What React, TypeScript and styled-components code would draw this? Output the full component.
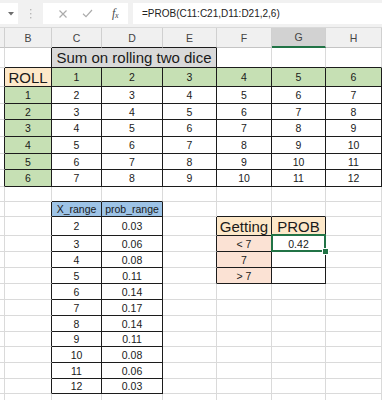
import styled, { createGlobalStyle } from "styled-components";

const GlobalStyle = createGlobalStyle`
  html, body {
    margin: 0;
    padding: 0;
    background: #ffffff;
  }
  body {
    font-family: "Liberation Sans", Arial, sans-serif;
  }
`;

// sheet geometry (px)
const COLS = [5, 47, 50, 61, 54, 55, 54, 56];
const ROWS = [20, 19, 17, 16, 17, 17, 16, 17, 15, 15, 19, 16, 16, 16, 16, 16, 16, 15, 16, 16, 15, 20];
const LETTERS = ["", "B", "C", "D", "E", "F", "G", "H"];
const ACTIVE_COL = 6;

const GRID = "#dadada";
const BLACK = "#1c1c1c";
const GREEN = "#c6e0b4";
const PEACH = "#fde8c9";
const PINK = "#fbe2d4";
const BLUE = "#9dc3e6";
const GRAY = "#d9d9d9";
const EXCEL = "#217346";

type CellData = {
    text?: string;
    bg?: string;
    big?: boolean;
    span?: number;
    covered?: boolean;
    selected?: boolean;
};

const cells = new Map<string, CellData>();
const put = (r: number, c: number, d: CellData) => cells.set(`${r}-${c}`, d);
const boxed = (r: number, c: number) => cells.has(`${r}-${c}`);

// title + dice table
put(1, 2, { text: "Sum on rolling two dice", bg: GRAY, big: true, span: 3 });
put(1, 3, { covered: true });
put(1, 4, { covered: true });
put(2, 1, { text: "ROLL", bg: PEACH, big: true });
for (let j = 1; j <= 6; j++) put(2, j + 1, { text: String(j), bg: GREEN });
for (let i = 1; i <= 6; i++) {
    put(2 + i, 1, { text: String(i), bg: GREEN });
    for (let j = 1; j <= 6; j++) put(2 + i, j + 1, { text: String(i + j) });
}

// x / prob table
const probs = ["0.03", "0.06", "0.08", "0.11", "0.14", "0.17", "0.14", "0.11", "0.08", "0.06", "0.03"];
put(10, 2, { text: "X_range", bg: BLUE });
put(10, 3, { text: "prob_range", bg: BLUE });
probs.forEach((p, k) => {
    put(11 + k, 2, { text: String(k + 2) });
    put(11 + k, 3, { text: p });
});

// result table
put(11, 5, { text: "Getting", bg: PEACH, big: true });
put(11, 6, { text: "PROB", bg: PEACH, big: true });
put(12, 5, { text: "< 7", bg: PINK });
put(12, 6, { text: "0.42", selected: true });
put(13, 5, { text: "7", bg: PINK });
put(13, 6, {});
put(14, 5, { text: "> 7", bg: PINK });
put(14, 6, {});

const Page = styled.div`
    width: 382px;
    height: 400px;
    overflow: hidden;
    background: #ffffff;
`;

const FormulaBar = styled.div`
    display: flex;
    align-items: center;
    height: 27px;
    background: #f1f1f1;
    border-bottom: 1px solid #d9d9d9;
`;

const NameBox = styled.div`
    width: 18px;
    height: 21px;
    background: #ffffff;
    display: flex;
    align-items: center;
    justify-content: flex-end;
    padding-right: 4px;
    box-sizing: border-box;
`;

const Grip = styled.div`
    width: 25px;
    display: flex;
    justify-content: center;
`;

const IconBox = styled.div`
    width: 85px;
    height: 21px;
    background: #ffffff;
    display: flex;
    align-items: center;
    box-sizing: border-box;
    padding-left: 11px;
    gap: 0;
`;

const IconSlot = styled.div<{ $w: number }>`
    width: ${(p) => p.$w}px;
    display: flex;
    align-items: center;
    justify-content: center;
`;

const Fx = styled.span`
    font-family: "Liberation Serif", "Times New Roman", serif;
    font-style: italic;
    font-size: 12px;
    color: #4a4a4a;
    letter-spacing: -0.5px;

    small {
        font-size: 8px;
        vertical-align: -1px;
    }
`;

const FormulaInput = styled.div`
    margin-left: 5px;
    flex: 1;
    height: 21px;
    background: #ffffff;
    display: flex;
    align-items: center;
    padding-left: 9px;
    font-size: 10px;
    color: #222222;
`;

const Sheet = styled.div`
    display: grid;
    grid-template-columns: ${COLS.map((w) => `${w}px`).join(" ")};
    grid-template-rows: 20px ${ROWS.map((h) => `${h}px`).join(" ")};
`;

const HeadCell = styled.div<{ $active?: boolean; $under: string }>`
    box-sizing: border-box;
    display: flex;
    align-items: center;
    justify-content: center;
    background: ${(p) => (p.$active ? "#d2d2d2" : "#f0f0f0")};
    border-right: 1px solid #d0d0d0;
    border-bottom: ${(p) => (p.$active ? `2px solid ${EXCEL}` : `1px solid ${p.$under}`)};
    font-size: 10.5px;
    color: #444444;
`;

const Cell = styled.div<{ $bg?: string; $big?: boolean; $right: string; $bottom: string; $span: number }>`
    position: relative;
    box-sizing: border-box;
    grid-column: span ${(p) => p.$span};
    display: flex;
    align-items: center;
    justify-content: center;
    white-space: nowrap;
    background: ${(p) => p.$bg ?? "#ffffff"};
    border-right: 1px solid ${(p) => p.$right};
    border-bottom: 1px solid ${(p) => p.$bottom};
    font-size: ${(p) => (p.$big ? "15px" : "10.5px")};
    color: #1a1a1a;
`;

const Selection = styled.span`
    position: absolute;
    top: -2px;
    left: -1px;
    right: -1px;
    bottom: -1px;
    border: 2px solid ${EXCEL};
    pointer-events: none;
    z-index: 2;
`;

const Handle = styled.span`
    position: absolute;
    right: -5px;
    bottom: -5px;
    width: 5px;
    height: 5px;
    background: ${EXCEL};
    border: 1px solid #ffffff;
`;

const CancelIcon = () => (
    <svg width="10" height="10" viewBox="0 0 10 10">
        <path d="M1.5 1.5 L8.5 8.5 M8.5 1.5 L1.5 8.5" stroke="#ababab" strokeWidth="1.2" fill="none" />
    </svg>
);

const EnterIcon = () => (
    <svg width="11" height="9" viewBox="0 0 11 9">
        <path d="M1 4.8 L4 7.6 L10 1" stroke="#ababab" strokeWidth="1.2" fill="none" />
    </svg>
);

const DropArrow = () => (
    <svg width="6" height="4" viewBox="0 0 6 4">
        <path d="M0 0 H6 L3 3.5 Z" fill="#6d6d6d" />
    </svg>
);

const GripDots = () => (
    <svg width="3" height="11" viewBox="0 0 3 11">
        <rect x="1" y="1" width="1.4" height="1.4" fill="#b8b8b8" />
        <rect x="1" y="5" width="1.4" height="1.4" fill="#b8b8b8" />
        <rect x="1" y="9" width="1.4" height="1.4" fill="#b8b8b8" />
    </svg>
);

const App = () => {
    const body: JSX.Element[] = [];

    for (let r = 1; r <= ROWS.length; r++) {
        for (let c = 0; c < COLS.length; c++) {
            const d = cells.get(`${r}-${c}`);
            if (d?.covered) continue;
            const span = d?.span ?? 1;
            const last = c + span - 1;
            const right = boxed(r, c) || boxed(r, last + 1) ? BLACK : GRID;
            const bottom = boxed(r, c) || boxed(r + 1, c) ? BLACK : GRID;
            body.push(
                <Cell
                    key={`${r}-${c}`}
                    $bg={d?.bg}
                    $big={d?.big}
                    $right={right}
                    $bottom={bottom}
                    $span={span}
                >
                    {d?.text}
                    {d?.selected ? (
                        <Selection>
                            <Handle />
                        </Selection>
                    ) : null}
                </Cell>
            );
        }
    }

    return (
        <>
            <GlobalStyle />
            <Page>
                <FormulaBar>
                    <NameBox>
                        <DropArrow />
                    </NameBox>
                    <Grip>
                        <GripDots />
                    </Grip>
                    <IconBox>
                        <IconSlot $w={18}>
                            <CancelIcon />
                        </IconSlot>
                        <IconSlot $w={30}>
                            <EnterIcon />
                        </IconSlot>
                        <IconSlot $w={26}>
                            <Fx>
                                f<small>x</small>
                            </Fx>
                        </IconSlot>
                    </IconBox>
                    <FormulaInput>=PROB(C11:C21,D11:D21,2,6)</FormulaInput>
                </FormulaBar>

                <Sheet>
                    {LETTERS.map((l, c) => (
                        <HeadCell key={`h${c}`} $active={c === ACTIVE_COL} $under={boxed(1, c) ? BLACK : "#c4c4c4"}>
                            {l}
                        </HeadCell>
                    ))}
                    {body}
                </Sheet>
            </Page>
        </>
    );
};

export default App;
